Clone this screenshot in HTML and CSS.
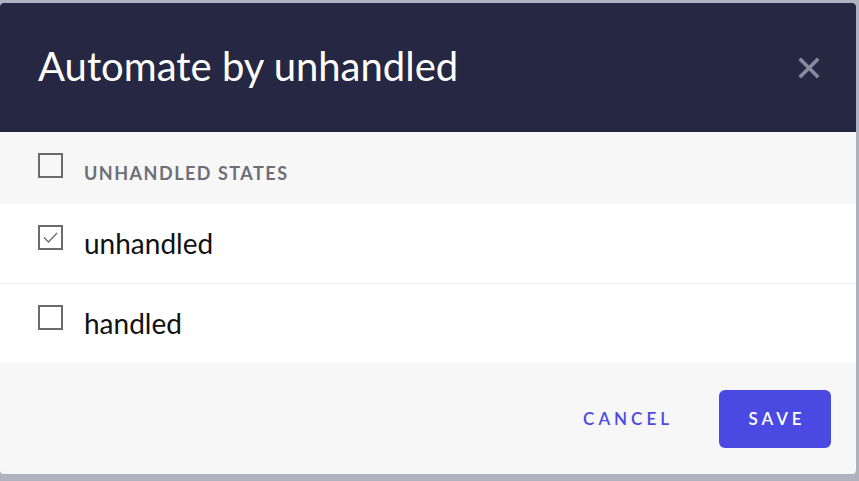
FILE: index.html
```html
<!DOCTYPE html>
<html>
<head>
<meta charset="utf-8">
<link rel="stylesheet" href="styles.css">
</head>
<body>
<div class="modal">
  <div class="modal-header">
    <h1 class="title">Automate by unhandled</h1>
    <button class="close" aria-label="Close">
      <svg width="22" height="22" viewBox="0 0 22 22"><path d="M3 3 L19 19 M19 3 L3 19" stroke="#8a8a9e" stroke-width="3.6" stroke-linecap="square"/></svg>
    </button>
  </div>
  <div class="list">
    <div class="row row-head">
      <span class="box"></span>
      <span class="head-label">UNHANDLED STATES</span>
    </div>
    <div class="row">
      <span class="box"><svg width="21" height="21" viewBox="0 0 21 21"><path d="M4 10.5 L8.5 15 L17 6" fill="none" stroke="#6b6b6b" stroke-width="1.3"/></svg></span>
      <span class="item-label">unhandled</span>
    </div>
    <div class="row last">
      <span class="box"></span>
      <span class="item-label">handled</span>
    </div>
  </div>
  <div class="modal-footer">
    <button class="btn-cancel">CANCEL</button>
    <button class="btn-save">SAVE</button>
  </div>
</div>
</body>
</html>
```

FILE: styles.css
```css
html, body {
  margin: 0;
  padding: 0;
}
body {
  background: #b1b2c0;
  width: 859px;
  height: 481px;
  overflow: hidden;
  font-family: Lato, "Open Sans", sans-serif;
}
.modal {
  margin-top: 3px;
  width: 856px;
  border-radius: 4px;
  overflow: hidden;
  background: #f7f7f7;
}
.modal-header {
  height: 129px;
  background: #262742;
  display: flex;
  align-items: center;
  justify-content: space-between;
  padding: 0 36px 0 38px;
  box-sizing: border-box;
}
.title {
  margin: 0;
  color: #ffffff;
  font-weight: 400;
  font-size: 40px;
  line-height: 1;
  padding-bottom: 4px;
}
.close {
  background: none;
  border: 0;
  padding: 0;
  width: 22px;
  height: 22px;
  display: flex;
}
.list {
  display: flex;
  flex-direction: column;
}
.row {
  display: flex;
  align-items: center;
  gap: 21px;
  padding-left: 38px;
  height: 80px;
  background: #ffffff;
  border-bottom: 1px solid #f1f1f1;
  box-sizing: border-box;
}
.row.last {
  height: 79px;
  border-bottom: 0;
}
.row .box {
  margin-bottom: 12px;
}
.row-head {
  height: 72px;
  background: #f7f7f7;
  border-bottom: 0;
}
.row.row-head .box {
  margin-bottom: 5px;
}
.box {
  width: 25px;
  height: 25px;
  box-sizing: border-box;
  border: 2px solid #6b6b6b;
  display: flex;
  align-items: center;
  justify-content: center;
  flex-shrink: 0;
}
.head-label {
  font-size: 18px;
  font-weight: 700;
  color: #6e6e76;
  letter-spacing: 1.5px;
  padding-top: 9px;
}
.item-label {
  font-size: 28px;
  color: #111111;
  padding-bottom: 2px;
}
.modal-footer {
  height: 111px;
  display: flex;
  align-items: center;
  justify-content: flex-end;
  gap: 46px;
  padding-right: 25px;
  box-sizing: border-box;
}
.btn-cancel {
  background: none;
  border: 0;
  padding: 0;
  font-family: inherit;
  font-size: 17px;
  font-weight: 600;
  color: #4b4be2;
  letter-spacing: 4px;
}
.btn-save {
  width: 112px;
  height: 58px;
  border: 0;
  border-radius: 6px;
  background: #4a4ae3;
  color: #ffffff;
  font-family: inherit;
  font-size: 17px;
  font-weight: 600;
  letter-spacing: 4px;
  padding: 0 0 0 4px;
}
```
